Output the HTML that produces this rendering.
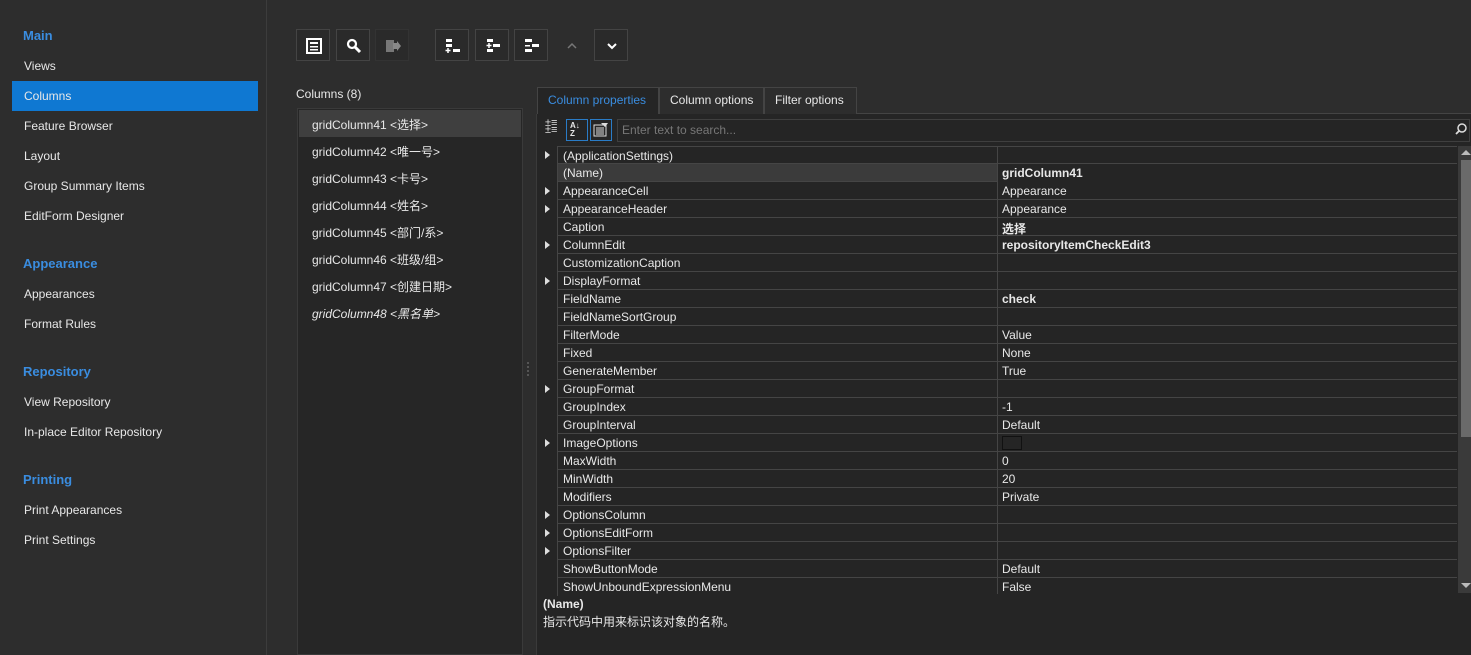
<!DOCTYPE html>
<html><head><meta charset="utf-8"><style>
*{box-sizing:border-box;margin:0;padding:0}
body{width:1471px;height:655px;background:#2d2d2d;font-family:"Liberation Sans","Noto Sans CJK SC",sans-serif;font-size:12px;color:#e8e8e8;position:relative;overflow:hidden}
.a{position:absolute}
#side{left:0;top:0;width:267px;height:655px;background:#2d2d2d;border-right:1px solid #3c3c3c}
.si{position:absolute;left:24px;font-size:12px;color:#e8e8e8}
.sh{position:absolute;left:23px;font-size:13px;font-weight:bold;color:#3a8de0}
.btn{position:absolute;top:29px;width:34px;height:32px;border:1px solid #444;background:#2a2a2a}
.btn svg{position:absolute;left:8px;top:7px}
#list{left:297px;top:108px;width:226px;height:547px;background:#262626;border:1px solid #3a3a3a}
.li{position:absolute;left:14px;font-size:12px;color:#e8e8e8}
.tab{position:absolute;top:87px;height:27px;border:1px solid #444;border-bottom:none;padding:5px 0 0 10px;font-size:12px;white-space:nowrap;overflow:hidden}
#grid{left:536px;top:114px;width:935px;height:541px;background:#252525;border-left:1px solid #3a3a3a}
.r{position:absolute;left:558px;width:899px;height:18px;border-bottom:1px solid #454545}
.r .n{position:absolute;left:5px;top:2px}
.r .v{position:absolute;left:439px;top:2px;padding-left:4px;border-left:1px solid #454545;height:18px;top:0;padding-top:2px}
.arr{position:absolute;left:545px;width:0;height:0;border-left:5px solid #ddd;border-top:4px solid transparent;border-bottom:4px solid transparent}
</style></head><body>
<div id="side" class="a">
<div class="sh" style="top:28px">Main</div>
<div class="si" style="top:59px">Views</div>
<div class="a" style="left:12px;top:81px;width:246px;height:30px;background:#0f78d2"></div>
<div class="si" style="top:89px">Columns</div>
<div class="si" style="top:119px">Feature Browser</div>
<div class="si" style="top:149px">Layout</div>
<div class="si" style="top:179px">Group Summary Items</div>
<div class="si" style="top:209px">EditForm Designer</div>
<div class="sh" style="top:256px">Appearance</div>
<div class="si" style="top:287px">Appearances</div>
<div class="si" style="top:317px">Format Rules</div>
<div class="sh" style="top:364px">Repository</div>
<div class="si" style="top:395px">View Repository</div>
<div class="si" style="top:425px">In-place Editor Repository</div>
<div class="sh" style="top:472px">Printing</div>
<div class="si" style="top:503px">Print Appearances</div>
<div class="si" style="top:533px">Print Settings</div>
</div>

<div class="btn" style="left:296px"><svg width="18" height="18"><rect x="2" y="2" width="14" height="14" fill="none" stroke="#fff" stroke-width="2"/><rect x="5" y="5" width="8" height="2" fill="#fff"/><rect x="5" y="9" width="8" height="1.5" fill="#fff"/><rect x="5" y="12" width="8" height="1.5" fill="#fff"/></svg></div>
<div class="btn" style="left:336px"><svg width="18" height="18"><circle cx="7" cy="7" r="4" fill="none" stroke="#fff" stroke-width="2.2"/><path d="M10 10l5 5" stroke="#fff" stroke-width="3"/></svg></div>
<div class="btn" style="left:375px;border-color:#333"><svg width="18" height="18"><rect x="2" y="3" width="8" height="12" fill="#777"/><path d="M9 6h4V4l4 5-4 5v-2H9z" fill="#888"/></svg></div>
<div class="btn" style="left:435px"><svg width="18" height="18"><rect x="2" y="2" width="6" height="3" fill="#fff"/><rect x="2" y="7" width="6" height="3" fill="#fff"/><rect x="9" y="12" width="7" height="3" fill="#fff"/><path d="M4 11v5M1.5 13.5h5" stroke="#fff" stroke-width="1.5"/></svg></div>
<div class="btn" style="left:475px"><svg width="18" height="18"><rect x="3" y="2" width="6" height="3" fill="#fff"/><rect x="9" y="7" width="7" height="3" fill="#fff"/><rect x="3" y="12" width="6" height="3" fill="#fff"/><path d="M5 6v5M2.5 8.5h5" stroke="#fff" stroke-width="1.5"/></svg></div>
<div class="btn" style="left:514px"><svg width="18" height="18"><rect x="2" y="2" width="7" height="3" fill="#fff"/><rect x="9" y="7" width="7" height="3" fill="#fff"/><rect x="2" y="12" width="7" height="3" fill="#fff"/><rect x="2" y="8" width="5" height="1.5" fill="#fff"/></svg></div>
<div class="btn" style="left:554px;border-color:#2d2d2d;background:#2d2d2d"><svg width="18" height="18"><path d="M5 11l4-4 4 4" fill="none" stroke="#777" stroke-width="1.5"/></svg></div>
<div class="btn" style="left:594px"><svg width="18" height="18"><path d="M5 7l4 4 4-4" fill="none" stroke="#fff" stroke-width="2"/></svg></div>

<div class="a" style="left:296px;top:87px">Columns (8)</div>
<div id="list" class="a">
<div class="a" style="left:1px;top:1px;width:222px;height:27px;background:#3f3f3f"></div>
<div class="li" style="top:7px">gridColumn41 &lt;选择&gt;</div>
<div class="li" style="top:34px">gridColumn42 &lt;唯一号&gt;</div>
<div class="li" style="top:61px">gridColumn43 &lt;卡号&gt;</div>
<div class="li" style="top:88px">gridColumn44 &lt;姓名&gt;</div>
<div class="li" style="top:115px">gridColumn45 &lt;部门/系&gt;</div>
<div class="li" style="top:142px">gridColumn46 &lt;班级/组&gt;</div>
<div class="li" style="top:169px">gridColumn47 &lt;创建日期&gt;</div>
<div class="li" style="top:196px;font-style:italic">gridColumn48 &lt;黑名单&gt;</div>
</div>

<div class="tab" style="left:537px;width:122px;color:#3a8de0;background:#252525">Column properties</div>
<div class="tab" style="left:659px;width:105px">Column options</div>
<div class="tab" style="left:764px;width:93px">Filter options</div>
<div class="a" style="left:857px;top:113px;width:614px;height:1px;background:#444"></div>

<div id="grid" class="a"></div>
<div class="a" style="left:545px;top:120px;font-size:11px;line-height:7px;color:#ddd">±≡<br>±≡</div>
<div class="a" style="left:566px;top:119px;width:22px;height:22px;border:1px solid #2a7cc7;font-size:8px;line-height:8px;padding:2px 3px;font-weight:bold">A↓<br>Z</div>
<div class="a" style="left:590px;top:119px;width:22px;height:22px;border:1px solid #2a7cc7"><svg width="20" height="20"><rect x="3" y="5" width="12" height="11" fill="none" stroke="#ddd"/><path d="M5 8h8M5 10h8M5 12h8M5 14h8" stroke="#ddd"/><path d="M10 3l7 0-3 4z" fill="#ddd"/></svg></div>
<div class="a" style="left:617px;top:119px;width:853px;height:23px;border:1px solid #3f3f3f;color:#777;padding:3px 4px">Enter text to search...</div>
<svg class="a" style="left:1454px;top:122px" width="14" height="14"><circle cx="8" cy="6" r="4" fill="none" stroke="#ddd" stroke-width="1.5"/><path d="M5 9l-3 3" stroke="#ddd" stroke-width="1.8"/></svg>

<div class="a" style="left:557px;top:146px;width:1px;height:450px;background:#454545"></div>
<div class="r" style="top:146px;border-top:1px solid #454545"><span class="n">(ApplicationSettings)</span><span class="v"></span></div>
<div class="r" style="top:164px;background:#3b3b3b"><span class="n">(Name)</span><span class="v" style="font-weight:bold;background:#252525;width:460px">gridColumn41</span></div>
<div class="r" style="top:182px"><span class="n">AppearanceCell</span><span class="v">Appearance</span></div>
<div class="r" style="top:200px"><span class="n">AppearanceHeader</span><span class="v">Appearance</span></div>
<div class="r" style="top:218px"><span class="n">Caption</span><span class="v" style="font-weight:bold">选择</span></div>
<div class="r" style="top:236px"><span class="n">ColumnEdit</span><span class="v" style="font-weight:bold">repositoryItemCheckEdit3</span></div>
<div class="r" style="top:254px"><span class="n">CustomizationCaption</span><span class="v"></span></div>
<div class="r" style="top:272px"><span class="n">DisplayFormat</span><span class="v"></span></div>
<div class="r" style="top:290px"><span class="n">FieldName</span><span class="v" style="font-weight:bold">check</span></div>
<div class="r" style="top:308px"><span class="n">FieldNameSortGroup</span><span class="v"></span></div>
<div class="r" style="top:326px"><span class="n">FilterMode</span><span class="v">Value</span></div>
<div class="r" style="top:344px"><span class="n">Fixed</span><span class="v">None</span></div>
<div class="r" style="top:362px"><span class="n">GenerateMember</span><span class="v">True</span></div>
<div class="r" style="top:380px"><span class="n">GroupFormat</span><span class="v"></span></div>
<div class="r" style="top:398px"><span class="n">GroupIndex</span><span class="v">-1</span></div>
<div class="r" style="top:416px"><span class="n">GroupInterval</span><span class="v">Default</span></div>
<div class="r" style="top:434px"><span class="n">ImageOptions</span><span class="v"><span style="display:inline-block;width:20px;height:14px;border:1px solid #111;margin-top:0px"></span></span></div>
<div class="r" style="top:452px"><span class="n">MaxWidth</span><span class="v">0</span></div>
<div class="r" style="top:470px"><span class="n">MinWidth</span><span class="v">20</span></div>
<div class="r" style="top:488px"><span class="n">Modifiers</span><span class="v">Private</span></div>
<div class="r" style="top:506px"><span class="n">OptionsColumn</span><span class="v"></span></div>
<div class="r" style="top:524px"><span class="n">OptionsEditForm</span><span class="v"></span></div>
<div class="r" style="top:542px"><span class="n">OptionsFilter</span><span class="v"></span></div>
<div class="r" style="top:560px"><span class="n">ShowButtonMode</span><span class="v">Default</span></div>
<div class="r" style="top:578px;height:16px;overflow:hidden;border-bottom:none"><span class="n">ShowUnboundExpressionMenu</span><span class="v">False</span></div>
<div class="arr" style="top:151px"></div><div class="arr" style="top:187px"></div><div class="arr" style="top:205px"></div>
<div class="arr" style="top:241px"></div><div class="arr" style="top:277px"></div><div class="arr" style="top:385px"></div>
<div class="arr" style="top:439px"></div><div class="arr" style="top:511px"></div><div class="arr" style="top:529px"></div><div class="arr" style="top:547px"></div>

<div class="a" style="left:1458px;top:146px;width:13px;height:447px;background:#3a3a3a"></div>
<div class="a" style="left:1461px;top:160px;width:10px;height:277px;background:#6a6a6a"></div>
<div class="a" style="left:1461px;top:150px;border-bottom:5px solid #bbb;border-left:5px solid transparent;border-right:5px solid transparent"></div>
<div class="a" style="left:1461px;top:583px;border-top:5px solid #bbb;border-left:5px solid transparent;border-right:5px solid transparent"></div>

<div class="a" style="left:543px;top:597px;font-weight:bold">(Name)</div>
<div class="a" style="left:543px;top:613px">指示代码中用来标识该对象的名称。</div>
<div class="a" style="left:527px;top:362px;width:4px;height:14px;border-left:2px dotted #555"></div>
</body></html>
